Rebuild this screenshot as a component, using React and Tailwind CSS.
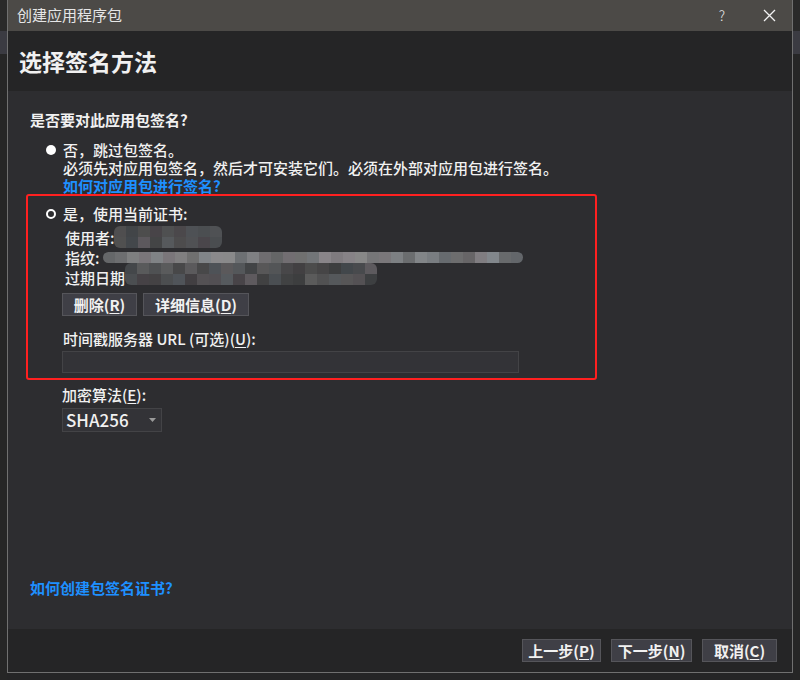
import React from 'react'

const FONT = { fontFamily: '"Noto Sans CJK SC", "Noto Sans", sans-serif' }

// grey tiles for the pixelated (redacted) certificate fields
const seeded = (seed) => {
    let s = seed
    return () => {
        s = (s * 9301 + 49297) % 233280
        return s / 233280
    }
}

const Mosaic = ({ cols, rows, seed, base, spread, className }) => {
    const rnd = seeded(seed)
    const cells = []
    for (let i = 0; i < cols * rows; i++) {
        const v = Math.round(base + (rnd() - 0.5) * spread)
        const tint = Math.round((rnd() - 0.5) * 10)
        cells.push(`rgb(${v + tint}, ${v}, ${v + Math.abs(tint)})`)
    }
    return (
        <div className={`absolute grid rounded-[6px] overflow-hidden opacity-90 ${className}`} style={{ gridTemplateColumns: `repeat(${cols}, 12px)` }}>
            {cells.map((c, i) => (
                <div key={i} className='h-[11px]' style={{ background: c }} />
            ))}
        </div>
    )
}

const Key = ({ children }) => <span className='underline underline-offset-2'>{children}</span>

const Button = ({ children, className = '' }) => (
    <button type='button' className={`h-[23px] bg-[#3f3f46] border border-[#55555a] text-[15px] leading-none font-semibold text-[#f1f1f1] flex items-center justify-center ${className}`}>
        {children}
    </button>
)

const App = () => {
    return (
        <div style={FONT} className='w-[800px] h-[680px] bg-[#252526] flex overflow-hidden text-[#f1f1f1]'>
            <div className='w-[7px] flex flex-col shrink-0'>
                <div className='h-[31px] bg-[#2a2a2a]' />
                <div className='h-[23px] bg-[#3b3b42]' />
                <div className='flex-1 bg-[#262626]' />
            </div>

            <div className='w-[786px] h-[673px] shrink-0 flex flex-col border-x border-b border-[#707070]'>
                {/* title bar */}
                <div className='h-[31px] bg-[#4c4a47] flex items-center pl-[9px] pr-[8px]'>
                    <span className='text-[15px] text-[#e6e6e6]'>创建应用程序包</span>
                    <div className='ml-auto flex items-center gap-[17px]'>
                        <span className='w-[30px] text-center text-[14px] font-light text-[#e6e6e6]'>?</span>
                        <span className='w-[30px] flex justify-center'>
                            <svg width='13' height='13' viewBox='0 0 13 13' stroke='#f2f2f2' strokeWidth='1.3'>
                                <path d='M1 1 L12 12 M12 1 L1 12' />
                            </svg>
                        </span>
                    </div>
                </div>

                {/* page header */}
                <div className='h-[60px] bg-[#252526] flex items-center pl-[11px]'>
                    <h1 className='text-[23px] font-bold'>选择签名方法</h1>
                </div>

                {/* content */}
                <div className='flex-1 bg-[#2d2d30] flex flex-col pl-[22px] text-[15px] leading-[18px] font-medium'>
                    <p className='mt-[20px] h-[18px] font-semibold'>是否要对此应用包签名?</p>

                    <div className='mt-[12px] flex'>
                        <div className='ml-[16px] mt-[4px] w-[10px] h-[10px] rounded-full bg-white' />
                        <div className='ml-[7px]'>
                            <p className='h-[18px]'>否，跳过包签名。</p>
                            <p className='h-[18px]'>必须先对应用包签名，然后才可安装它们。必须在外部对应用包进行签名。</p>
                            <p className='h-[18px] text-[#1e90ff] font-semibold'>如何对应用包进行签名?</p>
                        </div>
                    </div>

                    <div className='-mt-[1px] -ml-[4px] w-[571px] h-[186px] border-2 border-[#ff2020] rounded-[3px] flex flex-col pt-[9px]'>
                        <div className='flex items-center h-[18px]'>
                            <div className='ml-[18px] w-[10px] h-[10px] rounded-full border-[2.5px] border-white' />
                            <span className='ml-[7px]'>是，使用当前证书:</span>
                        </div>

                        <div className='relative mt-[5px] pl-[37px]'>
                            <p className='h-[20px] leading-[20px]'>使用者:</p>
                            <p className='h-[20px] leading-[20px]'>指纹:</p>
                            <p className='h-[20px] leading-[20px]'>过期日期</p>
                            <Mosaic cols={9} rows={2} seed={7} base={82} spread={26} className='left-[86px] -top-[2px]' />
                            <Mosaic cols={35} rows={1} seed={21} base={128} spread={40} className='left-[75px] top-[24px]' />
                            <Mosaic cols={21} rows={2} seed={3} base={80} spread={34} className='left-[97px] top-[35px]' />
                        </div>

                        <div className='mt-[5px] pl-[34px] flex gap-[6px]'>
                            <Button className='w-[75px]'>删除(<Key>R</Key>)</Button>
                            <Button className='w-[106px]'>详细信息(<Key>D</Key>)</Button>
                        </div>

                        <p className='mt-[14px] pl-[35px] h-[18px]'>时间戳服务器 URL (可选)(<Key>U</Key>):</p>
                        <div className='mt-[3px] ml-[34px] w-[457px] h-[22px] bg-[#333337] border border-[#434346]' />
                    </div>

                    <p className='mt-[6px] ml-[32px] h-[18px]'>加密算法(<Key>E</Key>):</p>
                    <div className='mt-[4px] ml-[32px] w-[100px] h-[24px] bg-[#333337] border border-[#434346] flex items-center pl-[3px] pr-[5px]'>
                        <span className='text-[17px] font-medium'>SHA256</span>
                        <svg className='ml-auto' width='7' height='4' viewBox='0 0 7 4'>
                            <path d='M0 0 H7 L3.5 4 Z' fill='#9a9a9a' />
                        </svg>
                    </div>

                    <p className='mt-auto mb-[32px] h-[18px] text-[#1e90ff] font-semibold'>如何创建包签名证书?</p>
                </div>

                {/* footer */}
                <div className='h-[43px] bg-[#252526] flex justify-end gap-[10px] pt-[10px] pr-[15px]'>
                    <Button className='w-[79px] border-[#1b8ef2]'>上一步(<Key>P</Key>)</Button>
                    <Button className='w-[81px]'>下一步(<Key>N</Key>)</Button>
                    <Button className='w-[75px]'>取消(<Key>C</Key>)</Button>
                </div>
            </div>

            <div className='w-[7px] flex flex-col shrink-0'>
                <div className='h-[31px] bg-[#2a2a2a]' />
                <div className='h-[23px] bg-[#3b3b42]' />
                <div className='flex-1 bg-[#262626]' />
            </div>
        </div>
    )
}

export default App
